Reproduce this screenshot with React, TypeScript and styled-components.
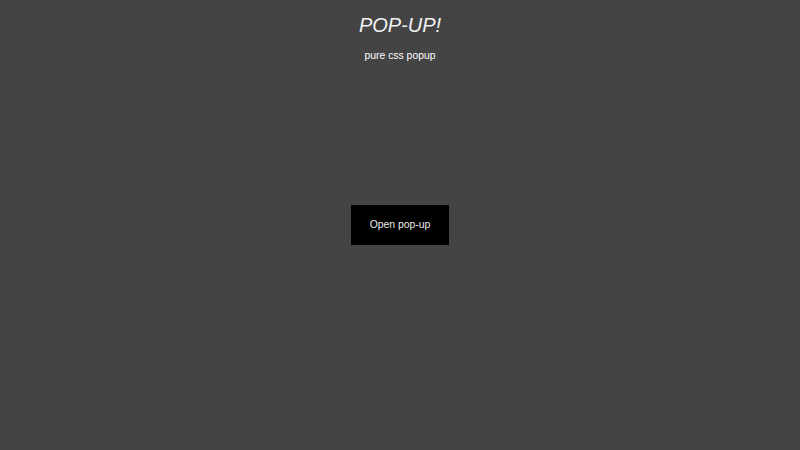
import React from "react";
import styled, { createGlobalStyle } from "styled-components";

const Global = createGlobalStyle`
  html, body { margin: 0; padding: 0; background: #444444; }
  body { font-family: "Liberation Sans", Arial, sans-serif; }
`;

const Page = styled.div`
  height: 100vh;
  display: grid;
  grid-template-rows: 1fr auto 1fr;
  justify-items: center;
`;

const Header = styled.header`
  align-self: start;
  display: flex;
  flex-direction: column;
  align-items: center;
  padding-top: 13px;
`;

const Title = styled.h1`
  margin: 0;
  font-size: 20px;
  line-height: 24px;
  font-style: italic;
  font-weight: normal;
  color: #f2f2f2;
`;

const Subtitle = styled.p`
  margin: 13px 0 0;
  font-size: 10.4px;
  line-height: 12px;
  color: #ffffff;
`;

const OpenButton = styled.button`
  width: 98px;
  height: 40px;
  display: flex;
  align-items: center;
  justify-content: center;
  border: none;
  background: #000000;
  color: #ececec;
  font-family: "Liberation Sans", Arial, sans-serif;
  font-size: 10.4px;
  line-height: 12px;
  padding: 0;
  cursor: pointer;
`;

export default function App() {
  return (
    <>
      <Global />
      <Page>
        <Header>
          <Title>POP-UP!</Title>
          <Subtitle>pure css popup</Subtitle>
        </Header>
        <OpenButton>Open pop-up</OpenButton>
        <div />
      </Page>
    </>
  );
}
